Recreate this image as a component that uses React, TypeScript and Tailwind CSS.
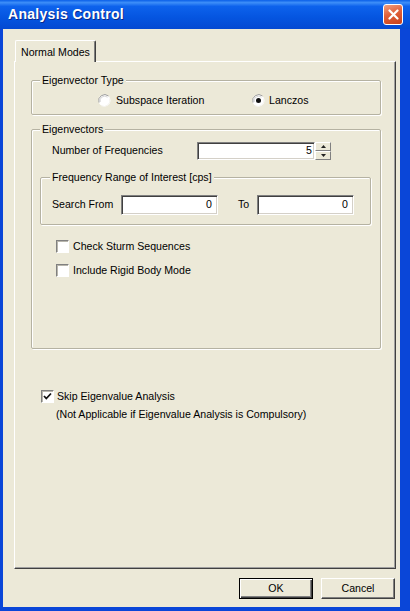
import type { ReactNode } from "react";

const sunken =
  "bg-white border border-t-[#808080] border-l-[#808080] border-r-white border-b-white shadow-[inset_1px_1px_0_#404040,inset_-1px_-1px_0_#d4d0c8]";

const etched =
  "border border-[#b5b2a2] rounded-[2px] shadow-[1px_1px_0_#ffffff,inset_1px_1px_0_#ffffff]";

function Group({
  title,
  className,
  legendClass = "ml-[8px]",
  children,
}: {
  title: string;
  className: string;
  legendClass?: string;
  children: ReactNode;
}) {
  return (
    <fieldset className={`${etched} ${className}`}>
      <legend className={`${legendClass} px-[2px] leading-[13px] bg-[#ece9d8]`}>{title}</legend>
      {children}
    </fieldset>
  );
}

function Radio({ checked }: { checked?: boolean }) {
  return (
    <svg width="13" height="13" viewBox="0 0 13 13" className="shrink-0">
      <circle cx="6.5" cy="6.5" r="6" fill="#ffffff" />
      <path d="M1 8.5 A6 6 0 0 1 10.5 2" fill="none" stroke="#9a9a9a" strokeWidth="1" />
      <path d="M2.2 8 A4.6 4.6 0 0 1 9.5 3.2" fill="none" stroke="#d8d8d8" strokeWidth="1" />
      <path d="M11.7 4.5 A6 6 0 0 1 3 11.6" fill="none" stroke="#f4f3ee" strokeWidth="1" />
      {checked && <circle cx="6.5" cy="6.5" r="2.5" fill="#111111" />}
    </svg>
  );
}

function Check({ checked }: { checked?: boolean }) {
  return (
    <div className="w-[13px] h-[13px] shrink-0 bg-white border border-t-[#808080] border-l-[#808080] border-r-white border-b-white shadow-[inset_1px_1px_0_#b8b6ac] flex items-center justify-center">
      {checked && (
        <svg width="9" height="9" viewBox="0 0 9 9">
          <path d="M1 4 L3.3 6.5 L8 1.5" fill="none" stroke="#111111" strokeWidth="1.8" />
        </svg>
      )}
    </div>
  );
}

function SpinBtn({ up }: { up?: boolean }) {
  return (
    <div className="h-[9px] w-[16px] bg-[#ece9d8] border border-t-white border-l-white border-r-[#808080] border-b-[#808080] flex items-center justify-center">
      <svg width="5" height="3" viewBox="0 0 5 3">
        {up ? <path d="M0 3 L2.5 0 L5 3 Z" fill="#222" /> : <path d="M0 0 L2.5 3 L5 0 Z" fill="#222" />}
      </svg>
    </div>
  );
}

export default function App() {
  return (
    <div className="w-[410px] h-[611px] flex flex-col bg-[#0a46d8] font-['Liberation_Sans',Arial,sans-serif] text-[10.6px] text-black select-none">
      {/* Title bar */}
      <div className="h-[29px] shrink-0 flex items-center justify-between pl-[8px] pr-[7px] bg-[linear-gradient(180deg,#0a5fe8_0%,#3d8ef8_9%,#0d62ec_22%,#0555e0_60%,#0449d2_100%)]">
        <span className="text-white font-bold text-[14px] tracking-[0.3px] [text-shadow:1px_1px_0_#0b2a8a]">
          Analysis Control
        </span>
        <div className="w-[20px] h-[21px] rounded-[3px] border border-white bg-[linear-gradient(160deg,#f0a080_0%,#e0603a_45%,#c8401a_100%)] flex items-center justify-center">
          <svg width="11" height="11" viewBox="0 0 11 11">
            <path d="M1.5 1.5 L9.5 9.5 M9.5 1.5 L1.5 9.5" stroke="#ffffff" strokeWidth="2.2" strokeLinecap="round" />
          </svg>
        </div>
      </div>

      {/* Client area */}
      <div className="flex-1 ml-[3px] mr-[10px] mb-[4px] bg-[#ece9d8] flex flex-col">
        {/* Tabs */}
        <div className="pt-[11px] pl-[12px] flex">
          <div className="relative z-10 -mb-[1px] w-[81px] h-[22px] pl-[5px] pt-[4px] bg-[#ece9d8] border-t border-l border-r border-t-white border-l-white border-r-[#404040] rounded-t-[2px] shadow-[inset_-1px_0_0_#808080]">
            Normal Modes
          </div>
        </div>

        {/* Panel */}
        <div className="ml-[11px] mr-[4px] h-[508px] border border-t-white border-l-white border-r-[#404040] border-b-[#404040] shadow-[inset_-1px_-1px_0_#a0a0a0] pl-[16px] pr-[14px] flex flex-col">
          <Group title="Eigenvector Type" className="mt-[12px] pt-[7px] pb-[7px]">
            <div className="flex items-center h-[13px] pl-[66px]">
              <div className="w-[154px] flex items-center gap-[5px]">
                <Radio />
                <span>Subspace Iteration</span>
              </div>
              <div className="flex items-center gap-[4px]">
                <Radio checked />
                <span>Lanczos</span>
              </div>
            </div>
          </Group>

          <Group title="Eigenvectors" className="mt-[8px] pt-[6px] pb-[71px]">
            <div className="flex items-center h-[18px] pl-[20px]">
              <span className="w-[145px]">Number of Frequencies</span>
              <div className={`${sunken} w-[118px] h-[18px] flex items-center justify-end pr-[2px]`}>5</div>
              <div className="flex flex-col">
                <SpinBtn up />
                <SpinBtn />
              </div>
            </div>

            <Group
              title="Frequency Range of Interest [cps]"
              legendClass="ml-[9px]"
              className="mt-[11px] ml-[8px] mr-[9px] pt-[11px] pb-[9px]"
            >
              <div className="flex items-center h-[20px] pl-[11px]">
                <span className="w-[69px]">Search From</span>
                <div className={`${sunken} w-[97px] h-[20px] flex items-center justify-end pr-[5px]`}>0</div>
                <span className="w-[39px] pl-[20px]">To</span>
                <div className={`${sunken} w-[97px] h-[20px] flex items-center justify-end pr-[5px]`}>0</div>
              </div>
            </Group>

            <div className="mt-[15px] pl-[24px] flex items-center gap-[4px] h-[13px]">
              <Check />
              <span>Check Sturm Sequences</span>
            </div>
            <div className="mt-[11px] pl-[24px] flex items-center gap-[4px] h-[13px]">
              <Check />
              <span>Include Rigid Body Mode</span>
            </div>
          </Group>

          <div className="mt-[41px] ml-[10px] flex items-center gap-[3px] h-[13px]">
            <Check checked />
            <span>Skip Eigenvalue Analysis</span>
          </div>
          <div className="mt-[5px] ml-[25px] leading-[13px]">
            (Not Applicable if Eigenvalue Analysis is Compulsory)
          </div>
        </div>

        {/* Buttons */}
        <div className="mt-[9px] pr-[5px] flex justify-end gap-[8px]">
          <button className="w-[74px] h-[21px] bg-[#ece9d8] border border-black shadow-[inset_1px_1px_0_#ffffff,inset_-1px_-1px_0_#404040,inset_-2px_-2px_0_#808080] flex items-center justify-center">
            OK
          </button>
          <button className="w-[74px] h-[21px] bg-[#ece9d8] border border-t-white border-l-white border-r-[#404040] border-b-[#404040] shadow-[inset_-1px_-1px_0_#808080] flex items-center justify-center">
            Cancel
          </button>
        </div>
      </div>
    </div>
  );
}
